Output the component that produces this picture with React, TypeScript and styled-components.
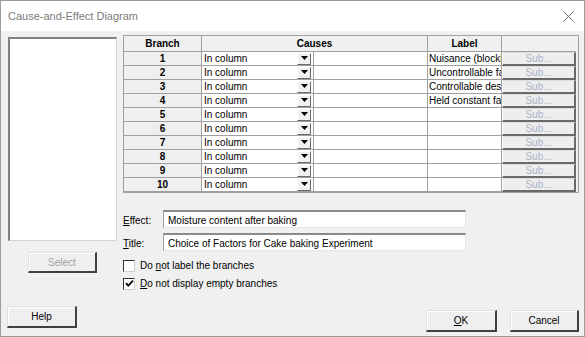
import React from "react";
import styled, { createGlobalStyle } from "styled-components";

const GlobalStyle = createGlobalStyle`
  html, body {
    margin: 0;
    padding: 0;
    background: #ffffff;
  }
  body {
    font-family: "Liberation Sans", Arial, sans-serif;
    font-size: 10px;
    color: #000;
  }
  * {
    box-sizing: border-box;
  }
`;

interface BranchRow {
  id: number;
  label: string;
}

const branches: BranchRow[] = [
  { id: 1, label: "Nuisance (blocking) factors" },
  { id: 2, label: "Uncontrollable factors" },
  { id: 3, label: "Controllable design factors" },
  { id: 4, label: "Held constant factors" },
  { id: 5, label: "" },
  { id: 6, label: "" },
  { id: 7, label: "" },
  { id: 8, label: "" },
  { id: 9, label: "" },
  { id: 10, label: "" },
];

const CloseIcon = () => (
  <svg width="11" height="11" viewBox="0 0 11 11">
    <path d="M0.5 0.5 L10.5 10.5 M10.5 0.5 L0.5 10.5" stroke="#6e6e6e" strokeWidth="1" />
  </svg>
);

const ArrowIcon = () => (
  <svg width="7" height="5" viewBox="0 0 7 5">
    <path d="M0 0 H7 L3.5 4 Z" fill="#000" />
  </svg>
);

const CheckIcon = () => (
  <svg width="9" height="9" viewBox="0 0 9 9">
    <path d="M1 4.2 L3.3 6.6 L8 1.6" stroke="#000" strokeWidth="1.8" fill="none" />
  </svg>
);

const App = () => {
  return (
    <>
      <GlobalStyle />
      <Window>
        <TitleBar>
          <TitleText>Cause-and-Effect Diagram</TitleText>
          <CloseBox>
            <CloseIcon />
          </CloseBox>
        </TitleBar>

        <Main>
          <LeftPane>
            <ListBox />
            <Button $width={69} $height={21} disabled>
              Select
            </Button>
          </LeftPane>

          <RightPane>
            <Grid>
              <HeaderCell>Branch</HeaderCell>
              <HeaderCell $span={2}>Causes</HeaderCell>
              <HeaderCell>Label</HeaderCell>
              <HeaderCell $last />

              {branches.map((b) => (
                <React.Fragment key={b.id}>
                  <BranchCell>{b.id}</BranchCell>
                  <ComboCell>
                    <ComboText>In column</ComboText>
                    <DropButton>
                      <ArrowIcon />
                    </DropButton>
                  </ComboCell>
                  <TextCell />
                  <TextCell>{b.label}</TextCell>
                  <SubCell>
                    <SubButton>Sub...</SubButton>
                  </SubCell>
                </React.Fragment>
              ))}
            </Grid>

            <FieldRow $top={17}>
              <FieldLabel>
                <u>E</u>ffect:
              </FieldLabel>
              <TextInput>Moisture content after baking</TextInput>
            </FieldRow>
            <FieldRow $top={5}>
              <FieldLabel>
                <u>T</u>itle:
              </FieldLabel>
              <TextInput>Choice of Factors for Cake baking Experiment</TextInput>
            </FieldRow>

            <CheckList>
              <CheckRow>
                <CheckBox />
                <span>
                  Do <u>n</u>ot label the branches
                </span>
              </CheckRow>
              <CheckRow>
                <CheckBox>
                  <CheckIcon />
                </CheckBox>
                <span>
                  <u>D</u>o not display empty branches
                </span>
              </CheckRow>
            </CheckList>
          </RightPane>
        </Main>

        <Footer>
          <HelpSlot>
            <Button $width={70} $height={22}>
              Help
            </Button>
          </HelpSlot>
          <ActionGroup>
            <Button $width={71} $height={22}>
              <u>O</u>K
            </Button>
            <Button $width={69} $height={22}>
              Cancel
            </Button>
          </ActionGroup>
        </Footer>
      </Window>
    </>
  );
};

export default App;

const Window = styled.div`
  width: 585px;
  height: 337px;
  border: 1px solid #9c9c9c;
  background: #f0f0f0;
  display: flex;
  flex-direction: column;
  overflow: hidden;
`;

const TitleBar = styled.div`
  height: 30px;
  flex: none;
  background: #ffffff;
  display: flex;
  align-items: center;
  justify-content: space-between;
  padding: 0 10px 0 7px;
`;

const TitleText = styled.div`
  font-size: 11px;
  color: #7b7b7b;
`;

const CloseBox = styled.div`
  display: flex;
  align-items: center;
  margin-top: 1px;
`;

const Main = styled.div`
  flex: 1;
  display: flex;
  gap: 6px;
  padding: 4px 5px 0 7px;
`;

const LeftPane = styled.div`
  width: 109px;
  display: flex;
  flex-direction: column;
  align-items: center;
  gap: 11px;
  padding-top: 2px;
`;

const ListBox = styled.div`
  width: 109px;
  height: 204px;
  background: #ffffff;
  border-style: solid;
  border-width: 2px 1px 1px 2px;
  border-color: #828282 #d6d6d6 #d6d6d6 #828282;
`;

const Button = styled.button<{ $width: number; $height: number }>`
  width: ${(p) => p.$width}px;
  height: ${(p) => p.$height}px;
  padding: 0;
  font-family: "Liberation Sans", Arial, sans-serif;
  font-size: 10px;
  color: #000;
  background: #efefef;
  border-style: solid;
  border-width: 1px 2px 2px 1px;
  border-color: #e0e0e0 #404040 #404040 #e0e0e0;
  box-shadow: inset 1px 1px #ffffff;

  &:disabled {
    color: #a3a3a3;
  }
`;

const RightPane = styled.div`
  width: 456px;
  display: flex;
  flex-direction: column;
`;

const Grid = styled.div`
  width: 456px;
  height: 158px;
  display: grid;
  grid-template-columns: 78px 112px 114px 74px 74px;
  grid-template-rows: 16px;
  grid-auto-rows: 14px;
  border: 1px solid #a0a0a0;
  background: #f0f0f0;
`;

const Cell = styled.div`
  border-right: 1px solid #a0a0a0;
  border-bottom: 1px solid #a0a0a0;
  white-space: nowrap;
  overflow: hidden;
  line-height: 13px;
`;

const HeaderCell = styled(Cell)<{ $span?: number; $last?: boolean }>`
  grid-column: span ${(p) => p.$span ?? 1};
  background: #f0f0f0;
  font-weight: bold;
  text-align: center;
  line-height: 15px;
  border-right-color: ${(p) => (p.$last ? "transparent" : "#a0a0a0")};
`;

const BranchCell = styled(Cell)`
  background: #efefef;
  font-weight: bold;
  text-align: center;
`;

const ComboCell = styled(Cell)`
  background: #ffffff;
  display: flex;
  align-items: center;
  padding: 0 2px 0 2px;
`;

const ComboText = styled.span`
  flex: 1;
`;

const DropButton = styled.div`
  width: 14px;
  height: 12px;
  display: flex;
  align-items: center;
  justify-content: center;
  background: #f0f0f0;
  border-style: solid;
  border-width: 1px;
  border-color: #ffffff #6a6a6a #6a6a6a #ffffff;
`;

const TextCell = styled(Cell)`
  background: #ffffff;
  padding-left: 1px;
`;

const SubCell = styled.div`
  display: flex;
`;

const SubButton = styled.div`
  flex: 1;
  background: #eeeeee;
  color: #aab4c6;
  text-align: center;
  line-height: 11px;
  border-style: solid;
  border-width: 1px 2px 2px 1px;
  border-color: #dcdcdc #6a6a6a #6a6a6a #ffffff;
`;

const FieldRow = styled.div<{ $top: number }>`
  display: flex;
  align-items: center;
  margin-top: ${(p) => p.$top}px;
  height: 18px;
`;

const FieldLabel = styled.div`
  width: 40px;
  padding-top: 2px;
`;

const TextInput = styled.div`
  width: 303px;
  height: 18px;
  background: #ffffff;
  padding: 2px 0 0 4px;
  line-height: 13px;
  border-style: solid;
  border-width: 2px 1px 1px 1px;
  border-color: #8a8a8a #e6e6e6 #e6e6e6 #a0a0a0;
  white-space: nowrap;
  overflow: hidden;
`;

const CheckList = styled.div`
  display: flex;
  flex-direction: column;
  gap: 5px;
  margin-top: 8px;
`;

const CheckRow = styled.div`
  display: flex;
  align-items: center;
  gap: 5px;
  height: 13px;
`;

const CheckBox = styled.div`
  width: 12px;
  height: 12px;
  background: #ffffff;
  border-style: solid;
  border-width: 1px;
  border-color: #333333 #cfcfcf #cfcfcf #333333;
  display: flex;
  align-items: center;
  justify-content: center;
`;

const Footer = styled.div`
  display: flex;
  justify-content: space-between;
  align-items: flex-end;
  padding: 0 5px 4px 6px;
`;

const HelpSlot = styled.div`
  margin-bottom: 4px;
`;

const ActionGroup = styled.div`
  display: flex;
  gap: 13px;
`;
